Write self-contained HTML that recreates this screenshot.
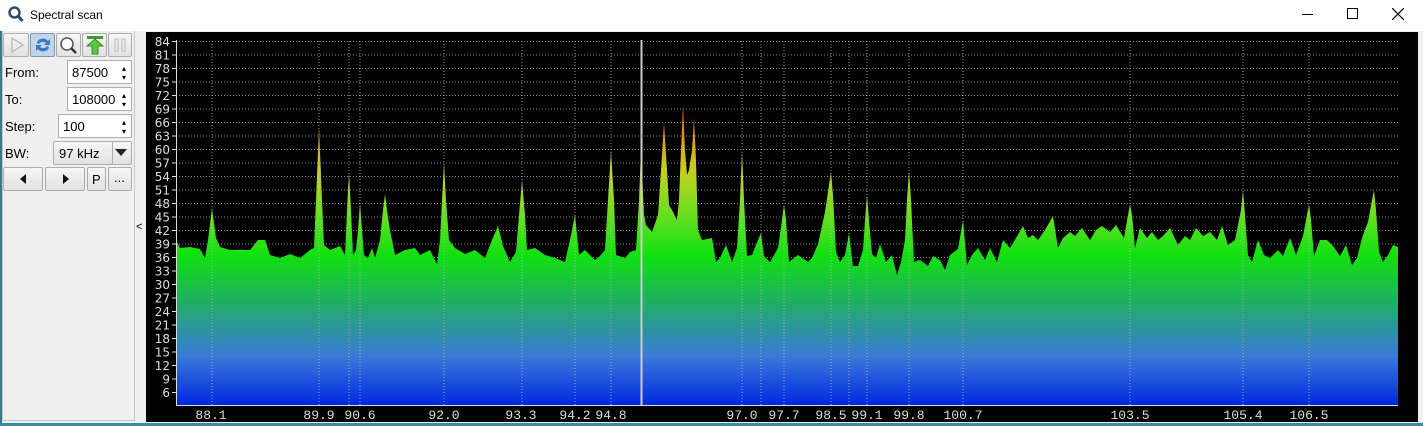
<!DOCTYPE html>
<html><head><meta charset="utf-8"><style>
*{margin:0;padding:0;box-sizing:border-box}
body{width:1423px;height:426px;overflow:hidden;background:#f0f0f0;font-family:"Liberation Sans",sans-serif;font-size:13px;position:relative}
.tb{position:absolute;left:0;top:0;width:1423px;height:31px;background:#fff}
.abs{position:absolute}
.btn{position:absolute;height:24px;border:1px solid #adadad;background:linear-gradient(#f6f6f6,#e2e2e2);border-radius:2px}
.spin{position:absolute;height:24px;border:1px solid #adadad;background:#fff;font-size:13px;padding:4px 0 0 4px}
.lbl{position:absolute;font-size:13px;color:#000}
</style></head><body>
<div class="tb">
<svg class="abs" style="left:8px;top:6px" width="16" height="18"><circle cx="6.5" cy="6.5" r="5" fill="none" stroke="#2b4a6a" stroke-width="2.4"/><line x1="10" y1="10" x2="14.5" y2="15" stroke="#2b4a6a" stroke-width="3"/></svg>
<div class="abs" style="left:30px;top:8px;font-size:12px">Spectral scan</div>
<div class="abs" style="left:1302px;top:14px;width:11px;height:1px;background:#000"></div>
<div class="abs" style="left:1347px;top:8px;width:11px;height:11px;border:1px solid #000"></div>
<svg class="abs" style="left:1392px;top:8px" width="12" height="12"><path d="M0 0L12 12M12 0L0 12" stroke="#000" stroke-width="1.2"/></svg>
</div>
<div class="abs" style="left:0;top:31px;width:2px;height:395px;background:#3a7a8a"></div>
<div class="abs" style="left:0;top:423px;width:1423px;height:3px;background:#3a8aa0"></div>
<div class="abs" style="left:2px;top:31px;width:133px;height:390px;border:1px solid #c8c8c8;border-top:none"></div>
<div class="btn" style="left:3px;top:33px;width:26px"><svg width="24" height="22"><path d="M8 4L19 11L8 18Z" fill="none" stroke="#aaa"/></svg></div>
<div class="btn" style="left:30px;top:33px;width:25px;background:#c5d4e4;border-color:#7a9ab8"><svg width="24" height="22"><path d="M6 9a6 5 0 0 1 11-2l2-2v6h-6l2-2a4 3 0 0 0-7 1z M18 13a6 5 0 0 1-11 2l-2 2v-6h6l-2 2a4 3 0 0 0 7-1z" fill="#3a78c8"/></svg></div>
<div class="btn" style="left:56px;top:33px;width:25px"><svg width="24" height="22"><circle cx="10" cy="10" r="6" fill="#fff" stroke="#555" stroke-width="1.5"/><line x1="14" y1="14" x2="19" y2="19" stroke="#333" stroke-width="2.5"/></svg></div>
<div class="btn" style="left:82px;top:33px;width:25px"><svg width="24" height="22"><rect x="4" y="2" width="16" height="3" fill="#3a9a2a"/><path d="M12 5L20 12H15V20H9V12H4Z" fill="#5cc838" stroke="#3a8a2a"/></svg></div>
<div class="btn" style="left:108px;top:33px;width:24px"><svg width="22" height="22"><rect x="6" y="5" width="3" height="12" fill="none" stroke="#bbb"/><rect x="13" y="5" width="3" height="12" fill="none" stroke="#bbb"/></svg></div>
<div class="lbl" style="left:5px;top:65px">From:</div>
<div class="spin" style="left:67px;top:60px;width:65px">87500</div>
<div class="lbl" style="left:5px;top:92px">To:</div>
<div class="spin" style="left:67px;top:87px;width:65px">108000</div>
<div class="lbl" style="left:5px;top:119px">Step:</div>
<div class="spin" style="left:58px;top:114px;width:74px">100</div>
<div class="abs" style="left:122px;top:64px;font-size:8px;line-height:9px">▴<br>▾</div>
<div class="abs" style="left:122px;top:91px;font-size:8px;line-height:9px">▴<br>▾</div>
<div class="abs" style="left:122px;top:118px;font-size:8px;line-height:9px">▴<br>▾</div>
<div class="lbl" style="left:5px;top:146px">BW:</div>
<div class="btn" style="left:53px;top:141px;width:79px;padding:4px 0 0 5px">97 kHz</div>
<div class="abs" style="left:112px;top:142px;width:1px;height:22px;background:#adadad"></div>
<div class="abs" style="left:115px;top:149px;border-left:6px solid transparent;border-right:6px solid transparent;border-top:7px solid #222"></div>
<div class="btn" style="left:3px;top:167px;width:40px"><div class="abs" style="left:16px;top:6px;border-top:5px solid transparent;border-bottom:5px solid transparent;border-right:6px solid #111"></div></div>
<div class="btn" style="left:45px;top:167px;width:40px"><div class="abs" style="left:17px;top:6px;border-top:5px solid transparent;border-bottom:5px solid transparent;border-left:6px solid #111"></div></div>
<div class="btn" style="left:87px;top:167px;width:19px;padding:4px 0 0 4px">P</div>
<div class="btn" style="left:108px;top:167px;width:24px;padding:2px 0 0 5px">...</div>
<div class="abs" style="left:136px;top:221px;font-size:11px">&lt;</div>
<svg class="abs" style="left:146px;top:32px" width="1272" height="390" viewBox="146 32 1272 390">
<defs><linearGradient id="g" x1="0" y1="32" x2="0" y2="405" gradientUnits="userSpaceOnUse">
<stop offset="0.2" stop-color="#e05a20"/><stop offset="0.27" stop-color="#d89020"/><stop offset="0.37" stop-color="#c8d020"/><stop offset="0.5" stop-color="#60e020"/><stop offset="0.6" stop-color="#10e010"/><stop offset="0.72" stop-color="#20b060"/><stop offset="0.87" stop-color="#3a7ad8"/><stop offset="1" stop-color="#0028e0"/></linearGradient></defs>
<rect x="146" y="32" width="1272" height="390" fill="#000"/>
<g stroke="#888" stroke-width="1" stroke-dasharray="1,2" fill="none">
<path d="M176 41.5H1398M176 55H1398M176 68.5H1398M176 82H1398M176 95.5H1398M176 109H1398M176 122.5H1398M176 136H1398M176 149.5H1398M176 163H1398M176 176.5H1398M176 190H1398M176 203.5H1398M176 217H1398M176 230.5H1398M176 244H1398M176 257.5H1398M176 271H1398M176 284.5H1398M176 298H1398M176 311.5H1398M176 325H1398M176 338.5H1398M176 352H1398M176 365.5H1398M176 379H1398M176 392.5H1398"/>
</g>
<polygon fill="url(#g)" points="176,240 180,248 190,247 200,249 205,258 208,240 212,208 216,238 220,247 230,250 250,250 258,240 265,240 270,255 280,258 290,254 300,258 310,250 314,248 316,200 319,127 322,200 324,245 330,250 340,246 345,255 347,210 349,172 351,210 353,255 356,250 358,230 360,203 362,230 364,255 368,258 372,248 375,258 380,240 383,210 385,194 387,210 390,230 395,255 405,250 415,248 420,255 430,250 437,264 440,240 442,200 444,163 446,200 449,240 455,248 465,254 475,250 485,258 492,240 498,226 503,246 510,262 516,252 519,215 522,180 525,215 527,250 535,248 545,255 555,258 565,262 570,240 575,215 579,255 585,250 595,260 600,256 605,250 608,200 611,150 614,200 616,255 625,258 630,252 636,250 639,200 641,149 644,215 646,225 652,232 658,215 661,170 664,122 667,170 669,205 672,210 677,220 679,200 681,150 683,104 685,150 687,175 689,170 692,150 694,118 696,160 698,230 702,240 712,238 716,262 720,258 726,245 732,262 737,248 740,200 742,150 744,200 747,256 752,255 758,240 761,233 764,256 770,262 778,248 782,220 784,204 786,220 789,262 798,255 808,262 812,258 818,244 825,212 829,185 831,172 833,195 836,252 840,262 845,255 849,233 853,266 858,266 863,250 865,220 867,194 869,220 872,254 876,258 880,244 886,262 892,255 897,275 901,262 905,240 907,200 909,171 911,200 914,262 920,260 928,266 933,256 940,260 945,270 950,255 958,249 963,220 967,265 972,255 978,248 985,260 990,248 997,262 1003,240 1010,248 1016,238 1023,226 1028,238 1033,235 1038,240 1045,230 1053,216 1058,248 1063,238 1070,232 1075,236 1082,228 1090,240 1096,230 1102,226 1110,232 1116,225 1124,238 1128,215 1130,204 1132,215 1135,248 1140,228 1147,238 1152,232 1158,240 1163,236 1170,228 1178,245 1185,236 1190,240 1196,228 1203,236 1210,232 1217,240 1222,226 1228,245 1235,240 1241,210 1243,190 1245,215 1248,255 1252,262 1258,240 1264,255 1270,258 1278,250 1283,256 1290,238 1296,255 1303,236 1307,215 1309,204 1311,220 1314,256 1320,240 1327,240 1333,246 1340,256 1346,245 1352,265 1357,258 1362,238 1368,222 1372,200 1374,190 1376,210 1379,252 1383,262 1388,255 1393,245 1398,247 1398,405 176,405"/>
<g stroke="#bbb" stroke-width="1" stroke-dasharray="1,2" fill="none" opacity="0.8">
<path d="M212 41V405M319 41V405M349 41V405M360 41V405M444 41V405M522 41V405M575 41V405M611 41V405M742 41V405M761 41V405M784 41V405M831 41V405M849 41V405M867 41V405M909 41V405M963 41V405M1130 41V405M1243 41V405M1309 41V405"/>
</g>
<line x1="641.5" y1="40" x2="641.5" y2="405" stroke="#ccc" stroke-width="2"/>
<path d="M176.5 40V405.5H1398" stroke="#ddd" stroke-width="1" fill="none"/>
<g stroke="#ddd"><path d="M172 41.5h4M172 55h4M172 68.5h4M172 82h4M172 95.5h4M172 109h4M172 122.5h4M172 136h4M172 149.5h4M172 163h4M172 176.5h4M172 190h4M172 203.5h4M172 217h4M172 230.5h4M172 244h4M172 257.5h4M172 271h4M172 284.5h4M172 298h4M172 311.5h4M172 325h4M172 338.5h4M172 352h4M172 365.5h4M172 379h4M172 392.5h4"/></g>
<g fill="#ddd" font-family="DejaVu Sans, sans-serif" font-size="12" text-anchor="end">
<text x="170" y="46">84</text><text x="170" y="59.5">81</text><text x="170" y="73">78</text><text x="170" y="86.5">75</text><text x="170" y="100">72</text><text x="170" y="113.5">69</text><text x="170" y="127">66</text><text x="170" y="140.5">63</text><text x="170" y="154">60</text><text x="170" y="167.5">57</text><text x="170" y="181">54</text><text x="170" y="194.5">51</text><text x="170" y="208">48</text><text x="170" y="221.5">45</text><text x="170" y="235">42</text><text x="170" y="248.5">39</text><text x="170" y="262">36</text><text x="170" y="275.5">33</text><text x="170" y="289">30</text><text x="170" y="302.5">27</text><text x="170" y="316">24</text><text x="170" y="329.5">21</text><text x="170" y="343">18</text><text x="170" y="356.5">15</text><text x="170" y="370">12</text><text x="170" y="383.5">9</text><text x="170" y="397">6</text>
</g>
<g fill="#ddd" font-family="Liberation Mono, monospace" font-size="13" text-anchor="middle">
<text x="211" y="419">88.1</text><text x="319" y="419">89.9</text><text x="360" y="419">90.6</text><text x="444" y="419">92.0</text><text x="521" y="419">93.3</text><text x="575" y="419">94.2</text><text x="611" y="419">94.8</text><text x="742" y="419">97.0</text><text x="784" y="419">97.7</text><text x="831" y="419">98.5</text><text x="867" y="419">99.1</text><text x="909" y="419">99.8</text><text x="963" y="419">100.7</text><text x="1130" y="419">103.5</text><text x="1243" y="419">105.4</text><text x="1309" y="419">106.5</text>
</g>
</svg>
</body></html>
